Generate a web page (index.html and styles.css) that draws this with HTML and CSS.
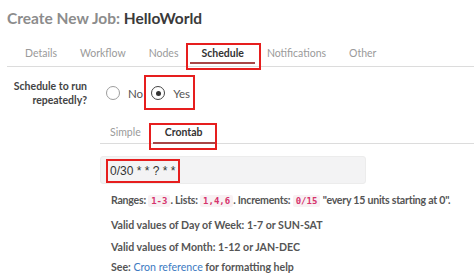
FILE: index.html
```html
<!DOCTYPE html>
<html lang="en">
<head>
  <meta charset="UTF-8">
  <title>Create New Job: HelloWorld</title>
  <link rel="stylesheet" href="styles.css">
</head>
<body>
  <h1 class="page-title"><span class="title-muted">Create New Job:</span> HelloWorld</h1>

  <nav class="tabs">
    <span class="tab">Details</span>
    <span class="tab">Workflow</span>
    <span class="tab">Nodes</span>
    <span class="tab active marked">Schedule</span>
    <span class="tab">Notifications</span>
    <span class="tab">Other</span>
  </nav>

  <div class="form-row">
    <div class="form-label">Schedule to run<br>repeatedly?</div>
    <div class="radios">
      <label class="radio"><span class="radio-dot"></span>No</label>
      <label class="radio checked marked-yes"><span class="radio-dot"></span>Yes</label>
    </div>
  </div>

  <div class="schedule-body">
    <nav class="subtabs">
      <span class="subtab">Simple</span>
      <span class="subtab active marked-cron">Crontab</span>
    </nav>

    <div class="cron-input"><span class="cron-value">0/30 * * ? * *</span></div>

    <div class="help">
      <p class="help-line first">Ranges: <code>1-3</code>. Lists: <code>1,4,6</code>. Increments: <code>0/15</code> "every 15 units starting at 0".</p>
      <p class="help-line second">Valid values of Day of Week: 1-7 or SUN-SAT</p>
      <p class="help-line">Valid values of Month: 1-12 or JAN-DEC</p>
      <p class="help-line">See: <a href="#">Cron reference</a> for formatting help</p>
    </div>
  </div>
</body>
</html>
```

FILE: styles.css
```css
body {
  margin: 0;
  background: #ffffff;
  color: #444;
  font-family: 'Lato', sans-serif;
  width: 474px;
  height: 279px;
  overflow: hidden;
}

.page-title {
  margin: 0;
  padding-left: 7px;
  font-size: 15.5px;
  line-height: 36px;
  font-weight: 700;
  color: #3a3a3a;
  white-space: nowrap;
}

.title-muted {
  color: #8c8c8c;
}

/* main tabs */
.tabs {
  display: flex;
  margin-left: 7px;
  padding-left: 6.5px;
  border-bottom: 1px solid #dcdcdc;
}

.tab {
  position: relative;
  padding: 10px 11.5px 6px;
  font-size: 10.5px;
  line-height: 14px;
  color: #9a9a9a;
}

.tab.active {
  color: #333;
  font-weight: 700;
}

.tab.active::after {
  content: "";
  position: absolute;
  left: 0;
  right: 0;
  bottom: 2px;
  height: 2px;
  background: #a84646;
}

/* red annotation boxes */
.marked::before,
.marked-yes::before,
.marked-cron::before {
  content: "";
  position: absolute;
  border: 2px solid #e61e1e;
}

.marked::before {
  top: 7px;
  bottom: -4px;
  left: -4px;
  right: -6px;
}

/* radio row */
.form-row {
  display: flex;
  align-items: center;
  margin-top: 12px;
}

.form-label {
  width: 87px;
  text-align: right;
  font-size: 10.5px;
  line-height: 14px;
  font-weight: 700;
  color: #444;
}

.radios {
  display: flex;
  align-items: center;
  margin-left: 19px;
}

.radio {
  position: relative;
  display: flex;
  align-items: center;
  gap: 8px;
  margin-right: 8px;
  font-size: 11.5px;
  color: #555;
}

.radio-dot {
  width: 14px;
  height: 14px;
  box-sizing: border-box;
  border: 1.5px solid #9d9d9d;
  border-radius: 50%;
  display: flex;
  align-items: center;
  justify-content: center;
}

.checked .radio-dot {
  border-color: #444;
}

.checked .radio-dot::after {
  content: "";
  width: 5px;
  height: 5px;
  border-radius: 50%;
  background: #333;
}

.marked-yes::before {
  top: -11px;
  bottom: -10px;
  left: -7px;
  right: -5px;
}

/* schedule body */
.schedule-body {
  margin-left: 100px;
  margin-top: 11px;
}

.subtabs {
  display: flex;
  border-bottom: 1px solid #dcdcdc;
}

.subtab {
  position: relative;
  padding: 7px 12px 4px;
  font-size: 10.5px;
  line-height: 14px;
  color: #9a9a9a;
}

.subtab:first-child {
  padding-left: 10px;
}

.subtab.active {
  color: #333;
  font-weight: 700;
}

.subtab.active::after {
  content: "";
  position: absolute;
  left: 0;
  right: 0;
  bottom: -1px;
  height: 2px;
  background: #a84646;
}

.marked-cron::before {
  top: 5px;
  bottom: -7px;
  left: -4px;
  right: -2px;
}

.cron-input {
  width: 266px;
  height: 28px;
  box-sizing: border-box;
  margin-top: 12px;
  padding: 2px 5px;
  background: #f3f3f4;
  border: 1px solid #ececec;
  border-radius: 3px;
}

.cron-value {
  display: inline-block;
  height: 24px;
  box-sizing: border-box;
  padding: 0 3px 0 2px;
  border: 2px solid #e61e1e;
  font-family: 'Liberation Sans', Arial, sans-serif;
  font-size: 12px;
  line-height: 20px;
  color: #333;
}

.help {
  margin-top: 6px;
  padding-left: 11px;
}

.help-line {
  margin: 0;
  font-size: 10.6px;
  line-height: 20px;
  font-weight: 700;
  color: #555;
  white-space: nowrap;
}

.help-line.first {
  margin-bottom: 4px;
  letter-spacing: -0.25px;
}

.help-line.second {
  margin-bottom: 2px;
}

.help-line code {
  font-family: 'DejaVu Sans Mono', monospace;
  font-size: 9px;
  font-weight: 700;
  letter-spacing: 0;
  color: #d6336c;
  background: #f8f1f3;
  padding: 1px 3px;
  border-radius: 2px;
}

.help-line a {
  color: #3c7ac2;
  text-decoration: none;
  font-weight: 400;
}
```
